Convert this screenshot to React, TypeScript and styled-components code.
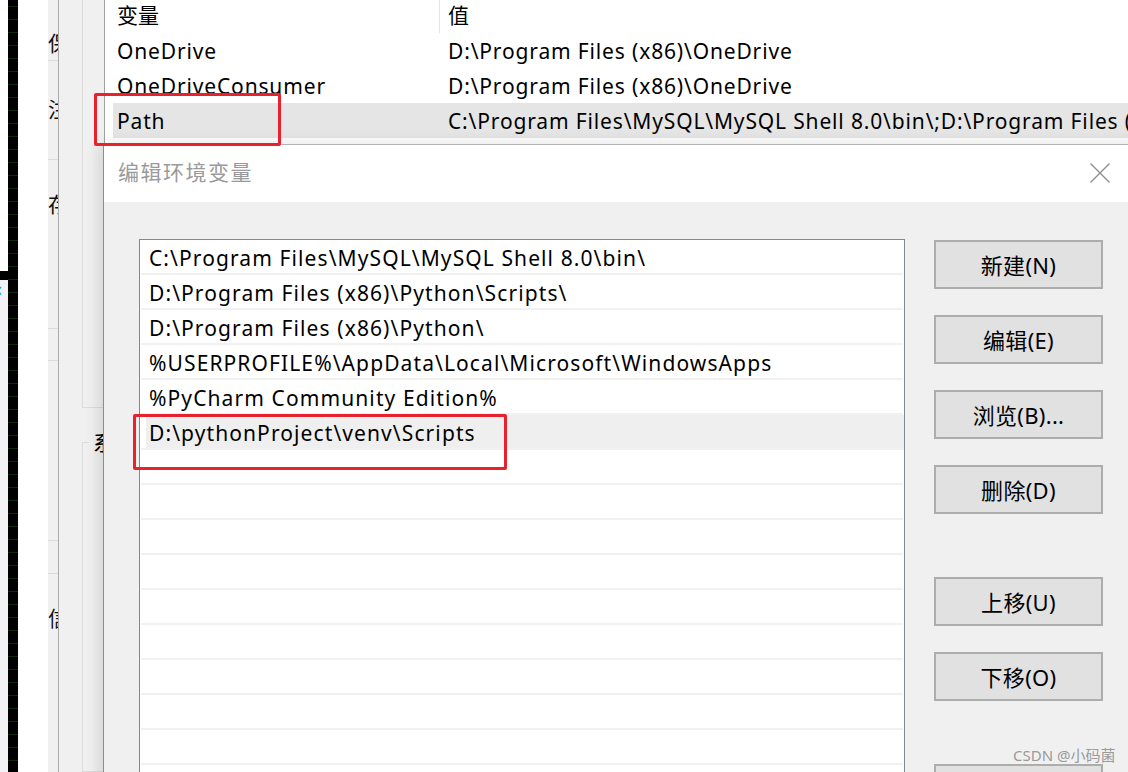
import styled, { createGlobalStyle } from "styled-components";

const GlobalStyle = createGlobalStyle`
  html, body {
    margin: 0;
    padding: 0;
    overflow: hidden;
    background: #ffffff;
  }
  body {
    font-family: "Noto Sans", "Noto Sans CJK SC", sans-serif;
  }
`;

const FONT = `"Noto Sans", "Noto Sans CJK SC", sans-serif`;

const pathEntries = [
  "C:\\Program Files\\MySQL\\MySQL Shell 8.0\\bin\\",
  "D:\\Program Files (x86)\\Python\\Scripts\\",
  "D:\\Program Files (x86)\\Python\\",
  "%USERPROFILE%\\AppData\\Local\\Microsoft\\WindowsApps",
  "%PyCharm Community Edition%",
  "D:\\pythonProject\\venv\\Scripts",
];

const userVars = [
  { name: "OneDrive", value: "D:\\Program Files (x86)\\OneDrive" },
  { name: "OneDriveConsumer", value: "D:\\Program Files (x86)\\OneDrive" },
  {
    name: "Path",
    value:
      "C:\\Program Files\\MySQL\\MySQL Shell 8.0\\bin\\;D:\\Program Files (x86)\\Python\\Scripts\\",
  },
];

const buttons = [
  { label: "新建(N)", gap: 0 },
  { label: "编辑(E)", gap: 26 },
  { label: "浏览(B)...", gap: 26 },
  { label: "删除(D)", gap: 26 },
  { label: "上移(U)", gap: 63 },
  { label: "下移(O)", gap: 26 },
  { label: "确定", gap: 63 },
];

const sliverItems = [
  { kind: "text", text: "保", top: 31 },
  { kind: "line", top: 5 },
  { kind: "text", text: "注", top: 36 },
  { kind: "line", top: 38 },
  { kind: "text", text: "存", top: 32 },
  { kind: "line", top: 112 },
  { kind: "line", top: 31 },
  { kind: "line", top: 179 },
  { kind: "line", top: 32 },
  { kind: "text", text: "信", top: 32 },
];

function App() {
  return (
    <>
      <GlobalStyle />
      <Desktop>
        <LeftEdge>
          <EdgeWhite />
          <EdgeBlack />
          <EdgeChevron>‹</EdgeChevron>
        </LeftEdge>
        <TerminalStrip />

        <SysPropsWindow>
          {sliverItems.map((item, i) =>
            item.kind === "text" ? (
              <SliverText key={i} $top={item.top}>
                {item.text}
              </SliverText>
            ) : (
              <SliverLine key={i} $top={item.top} />
            )
          )}
        </SysPropsWindow>

        <EnvWindow>
          <UserGroup>
            <VarList>
              <VarHeader>
                <HeaderCell $width={335}>变量</HeaderCell>
                <HeaderDivider />
                <HeaderCell>值</HeaderCell>
              </VarHeader>
              {userVars.map((v) => (
                <VarRow key={v.name} $selected={v.name === "Path"}>
                  <NameCell>{v.name}</NameCell>
                  <ValueCell>{v.value}</ValueCell>
                </VarRow>
              ))}
            </VarList>
          </UserGroup>
          <SystemGroup>
            <legend>系统变量</legend>
          </SystemGroup>
        </EnvWindow>

        <Dialog>
          <TitleBar>
            <Title>编辑环境变量</Title>
            <CloseButton>
              <svg width="20" height="20" viewBox="0 0 20 20">
                <path
                  d="M0.5 0.5 L19.5 19.5 M19.5 0.5 L0.5 19.5"
                  stroke="#8c8c8c"
                  strokeWidth="1.3"
                  fill="none"
                />
              </svg>
            </CloseButton>
          </TitleBar>
          <DialogBody>
            <PathList>
              {Array.from({ length: 16 }).map((_, i) => (
                <PathRow key={i} $selected={i === 5}>
                  {pathEntries[i] ?? ""}
                </PathRow>
              ))}
            </PathList>
            <ButtonColumn>
              {buttons.map((b) => (
                <DialogButton key={b.label} $gap={b.gap}>
                  {b.label}
                </DialogButton>
              ))}
            </ButtonColumn>
          </DialogBody>
        </Dialog>

        <Highlight $left={94} $top={93} $width={187} $height={53} />
        <Highlight $left={133} $top={414} $width={374} $height={56} />

        <Watermark>CSDN @小码菌</Watermark>
      </Desktop>
    </>
  );
}

export default App;

const Desktop = styled.div`
  position: relative;
  width: 1128px;
  height: 772px;
  overflow: hidden;
  background: #ffffff;
  font-family: ${FONT};
`;

const LeftEdge = styled.div`
  position: absolute;
  left: 0;
  top: 0;
  width: 8px;
  height: 100%;
  display: flex;
  flex-direction: column;
  background: #f3f3f5;
  overflow: hidden;
`;

const EdgeWhite = styled.div`
  height: 271px;
  background: #ffffff;
`;

const EdgeBlack = styled.div`
  height: 9px;
  background: #000000;
`;

const EdgeChevron = styled.div`
  margin-left: -4px;
  font-size: 20px;
  line-height: 18px;
  color: #1aa7d8;
`;

const TerminalStrip = styled.div`
  position: absolute;
  left: 8px;
  top: 0;
  width: 10px;
  height: 100%;
  background:
    repeating-linear-gradient(
      to bottom,
      transparent 0 6px,
      rgba(30, 120, 40, 0.35) 6px 7px,
      transparent 7px 13px
    ),
    #000000;
`;

const SysPropsWindow = styled.div`
  position: absolute;
  left: 48px;
  top: 0;
  width: 10px;
  height: 100%;
  background: #f0f0f0;
  overflow: hidden;
  display: flex;
  flex-direction: column;
`;

const SliverText = styled.div<{ $top: number }>`
  margin-top: ${(p) => p.$top}px;
  font-size: 21px;
  line-height: 24px;
  height: 24px;
  color: #111;
  white-space: nowrap;
`;

const SliverLine = styled.div<{ $top: number }>`
  margin-top: ${(p) => p.$top}px;
  height: 1px;
  background: #dadada;
  flex-shrink: 0;
`;

const EnvWindow = styled.div`
  position: absolute;
  left: 58px;
  top: 0;
  width: 1100px;
  height: 100%;
  background: #f0f0f0;
  border-left: 1px solid #ababab;
  display: flex;
  flex-direction: column;
  padding-left: 23px;
  box-sizing: border-box;
`;

const UserGroup = styled.div`
  height: 408px;
  border: 1px solid #dcdcdc;
  border-top: none;
  padding-left: 21px;
  box-sizing: border-box;
`;

const VarList = styled.div`
  height: 180px;
  background: #ffffff;
  border-left: 1px solid #a0a0a0;
  display: flex;
  flex-direction: column;
`;

const VarHeader = styled.div`
  display: flex;
  align-items: flex-start;
  height: 33px;
  font-size: 21px;
  color: #000;
`;

const HeaderCell = styled.div<{ $width?: number }>`
  width: ${(p) => (p.$width ? `${p.$width}px` : "auto")};
  padding-left: ${(p) => (p.$width ? "12px" : "8px")};
  line-height: 30px;
  box-sizing: border-box;
  flex-shrink: 0;
`;

const HeaderDivider = styled.div`
  width: 1px;
  height: 33px;
  background: #e5e5e5;
  margin-left: -1px;
`;

const VarRow = styled.div<{ $selected?: boolean }>`
  display: flex;
  align-items: center;
  height: 35px;
  margin-left: 8px;
  font-size: 21px;
  letter-spacing: 0.85px;
  color: #000;
  white-space: nowrap;
  background: ${(p) => (p.$selected ? "#e5e5e5" : "transparent")};
`;

const NameCell = styled.div`
  width: 327px;
  padding-left: 4px;
  flex-shrink: 0;
  box-sizing: border-box;
`;

const ValueCell = styled.div`
  padding-left: 8px;
  white-space: nowrap;
`;

const SystemGroup = styled.fieldset`
  margin: 22px 0 0 0;
  padding: 0 0 0 6px;
  border: 1px solid #dcdcdc;
  flex: 1;
  min-width: 0;

  legend {
    padding: 0 4px;
    font-size: 21px;
    line-height: 24px;
    color: #000;
  }
`;

const Dialog = styled.div`
  position: absolute;
  left: 103px;
  top: 144px;
  width: 1060px;
  height: 700px;
  border: 1px solid #b4b4b4;
  border-left-color: #8d8d8d;
  box-shadow: -4px 0 14px rgba(0, 0, 0, 0.12);
  display: flex;
  flex-direction: column;
  background: #f0f0f0;
`;

const TitleBar = styled.div`
  height: 57px;
  flex-shrink: 0;
  background: #ffffff;
  display: flex;
  align-items: center;
  justify-content: space-between;
  padding-left: 14px;
  padding-right: 54px;
`;

const Title = styled.div`
  font-family: "Noto Sans CJK SC", sans-serif;
  font-size: 21px;
  color: #9a9a9a;
  letter-spacing: 1.5px;
  margin-top: -5px;
`;

const CloseButton = styled.div`
  width: 20px;
  height: 20px;
  margin-top: -2px;
  display: flex;
`;

const DialogBody = styled.div`
  display: flex;
  gap: 29px;
  padding: 37px 0 0 35px;
`;

const PathList = styled.div`
  width: 766px;
  height: 600px;
  background: #ffffff;
  border: 1px solid #828790;
  box-sizing: border-box;
  display: flex;
  flex-direction: column;
  overflow: hidden;
`;

const PathRow = styled.div<{ $selected?: boolean }>`
  position: relative;
  flex-shrink: 0;
  height: 35px;
  line-height: 37px;
  padding-left: 9px;
  font-size: 21px;
  letter-spacing: 1.1px;
  color: #000;
  white-space: nowrap;
  background: ${(p) =>
    p.$selected
      ? "linear-gradient(to right, transparent 6px, #efefef 6px)"
      : "transparent"};

  &::after {
    content: "";
    position: absolute;
    left: 1px;
    right: 1px;
    bottom: 0;
    height: 2px;
    background: #f1f1f1;
  }
`;

const ButtonColumn = styled.div`
  display: flex;
  flex-direction: column;
  width: 169px;
  padding-top: 1px;
`;

const DialogButton = styled.div<{ $gap: number }>`
  margin-top: ${(p) => p.$gap}px;
  height: 49px;
  flex-shrink: 0;
  box-sizing: border-box;
  border: 2px solid #adadad;
  background: #e1e1e1;
  display: flex;
  align-items: center;
  justify-content: center;
  padding-bottom: 2px;
  font-size: 22px;
  letter-spacing: 0.3px;
  color: #000;
`;

const Highlight = styled.div<{
  $left: number;
  $top: number;
  $width: number;
  $height: number;
}>`
  position: absolute;
  left: ${(p) => p.$left}px;
  top: ${(p) => p.$top}px;
  width: ${(p) => p.$width}px;
  height: ${(p) => p.$height}px;
  box-sizing: border-box;
  border: 3px solid #e8222c;
  border-radius: 2px;
  pointer-events: none;
`;

const Watermark = styled.div`
  position: absolute;
  left: 1013px;
  top: 744px;
  font-size: 15px;
  color: rgba(130, 130, 130, 0.8);
  white-space: nowrap;
  font-family: "Noto Sans", "Noto Sans CJK SC", sans-serif;
`;
